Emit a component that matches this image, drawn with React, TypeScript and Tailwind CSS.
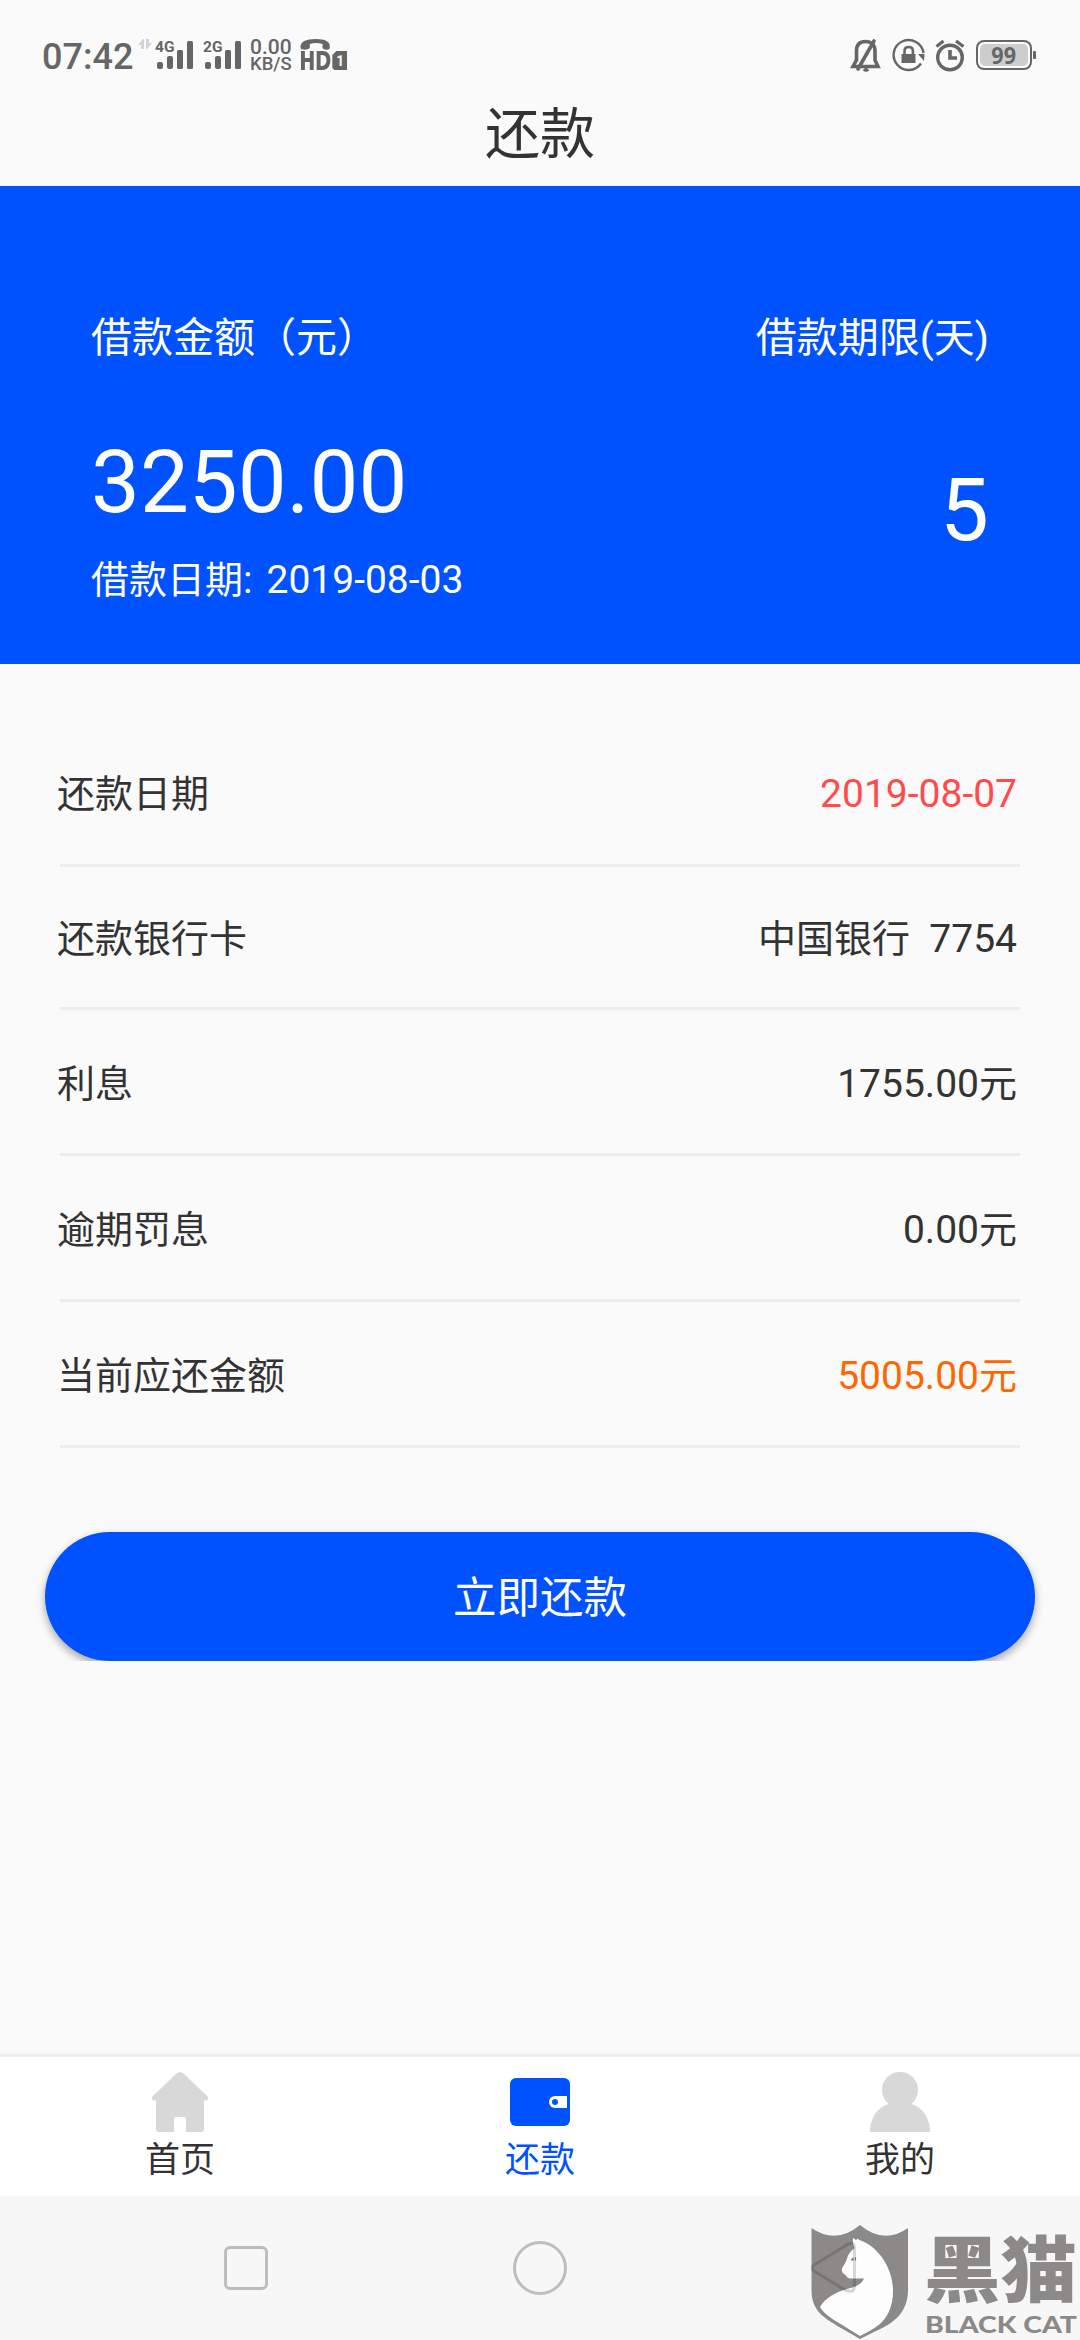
const details = [
    { label: '还款日期', bank: '', value: '2019-08-07', unit: '', color: 'text-[#ff4b4b]', height: 'h-[147px]' },
    { label: '还款银行卡', bank: '中国银行', value: '  7754', unit: '', color: 'text-[#333333]', height: 'h-[143px]' },
    { label: '利息', bank: '', value: '1755.00', unit: '元', color: 'text-[#333333]', height: 'h-[146px]' },
    { label: '逾期罚息', bank: '', value: '0.00', unit: '元', color: 'text-[#333333]', height: 'h-[146px]' },
    { label: '当前应还金额', bank: '', value: '5005.00', unit: '元', color: 'text-[#ff6600]', height: 'h-[146px]' },
];

function SignalIcon({ label }: { label: string }) {
    return (
        <svg width="42" height="36" viewBox="0 0 42 36" fill="#666666">
            <text x="0" y="17" fontSize="15.5" fontWeight="700" fontFamily="Roboto, sans-serif">
                {label}
            </text>
            <rect x="2" y="27" width="6" height="7" rx="2" />
            <rect x="12" y="21" width="6" height="13" rx="2" />
            <rect x="22" y="15" width="6" height="19" rx="1.5" />
            <rect x="32" y="6" width="6" height="28" rx="1.5" />
        </svg>
    );
}

function StatusBar() {
    return (
        <div className="flex h-[76px] items-end justify-between pl-[42px] pr-[44px] text-[#666666]">
            <div className="flex h-[41px] items-start">
                <span className="w-[95px] text-[36px] font-medium leading-[45px]">07:42</span>
                <svg width="16" height="14" viewBox="0 0 16 14" fill="#d4d4d4" className="ml-px mt-[3px]">
                    <path d="M0 7 5 1h1v10H3V7zM8 1h3v4h3l-5 6H8z" />
                </svg>
                <div className="ml-px w-[48px]"><SignalIcon label="4G" /></div>
                <div className="w-[47px]"><SignalIcon label="2G" /></div>
                <div className="mt-1 w-[50px] font-medium">
                    <div className="text-[21px] leading-[17px]">0.00</div>
                    <div className="text-[18.5px] leading-[16px]">KB/S</div>
                </div>
                <svg width="48" height="36" viewBox="1 0 49 36" preserveAspectRatio="none" fill="#666666">
                    <path d="M2 14c-2-6 3-10 15-10s16 4 14 10c-2 1-6 1-7-1v-4q-7-2-13 0v4c-2 2-7 2-9 1z" />
                    <path d="M2 16h4v7h5v-7h4v19h-4v-8H6v8H2zM18 16h6c5 0 8 3 8 9s-3 10-8 10h-6zM22 20v11c4 0 6-2 6-6s-2-5-6-5z" />
                    <path d="M34 20l4-4h11v19H36l-2-2z" />
                    <text x="38" y="31" fontSize="14" fontWeight="700" fontFamily="Roboto, sans-serif" fill="#fafafa">1</text>
                </svg>
            </div>
            <div className="flex h-[38px] items-start">
                <svg width="32" height="34" viewBox="0 0 32 34" fill="none" stroke="#666666" strokeWidth="3.6">
                    <path d="M3 28.5h25L25 22V13c0-6-3.500-9.500-9.500-9.500S6.500 7 6.500 13v9z" />
                    <path d="M24 3 8 31" strokeLinecap="round" />
                    <path d="M14 31q2 2 4 0" />
                </svg>
                <svg width="34" height="34" viewBox="0 0 34 34" className="ml-[10px]">
                    <path d="M31.500 15A15 15 0 1 0 29 25.500" fill="none" stroke="#666666" strokeWidth="2.4" />
                    <path d="M26 16h6.500l-.5 7z" fill="#666666" />
                    <path d="M9.500 16h14v9h-14z" fill="#666666" />
                    <path d="M12.500 17v-4q0-4 4.200-4t4.200 4v4" fill="none" stroke="#666666" strokeWidth="2.6" />
                </svg>
                <svg width="32" height="34" viewBox="0 0 32 34" fill="none" stroke="#666666" className="ml-[9px]">
                    <circle cx="15" cy="19.500" r="12.300" strokeWidth="3.400" />
                    <path d="M15 12v8h7" strokeWidth="3.600" />
                    <path d="m1.500 8.500 7-5.500M21 3l7.500 5.500" strokeWidth="3.200" />
                </svg>
                <div className="ml-[9px] mt-0.5 flex h-[30px] w-[56px] rounded-[8px] border-2 border-[#666666] p-0.5">
                    <div className="flex flex-1 items-center justify-center rounded-[5px] bg-[#cdcdcd]">
                        <span className="scale-x-90 font-['Noto_Sans'] text-[24px] font-bold leading-none">99</span>
                    </div>
                </div>
                <div className="ml-px mt-[13px] h-2 w-[3px] rounded-[1px] bg-[#666666]" />
            </div>
        </div>
    );
}

function LoanSummary() {
    return (
        <section className="flex h-[478px] justify-between bg-[#0052ff] px-[91px] text-white">
            <div className="flex flex-col">
                <div className="mt-[122px] text-[41px] leading-[60px]">借款金额（元）</div>
                <div className="mt-[62px] text-[87px] leading-[104px]">3250.00</div>
                <div className="mt-[16px] flex items-baseline leading-[60px]">
                    <span className="text-[38px]">借款日期</span>
                    <span className="text-[39px]">:</span>
                    <span className="ml-[14px] text-[39px]">2019-08-03</span>
                </div>
            </div>
            <div className="flex flex-col items-end">
                <div className="mt-[122px] text-[41px] leading-[60px]">借款期限(天)</div>
                <div className="mt-[90px] text-[87px] leading-[104px]">5</div>
            </div>
        </section>
    );
}

function HomeIcon() {
    return (
        <svg width="60" height="60" viewBox="0 0 60 60" fill="#d8d8d8">
            <path d="M26.500 1.500q3.500-3 7 0L57.500 24.500q2 4-2 4H54V57q0 3-3 3H36V48q0-3-3-3h-6q-3 0-3 3v12H9q-3 0-3-3V28.500H4.500q-4 0-2-4z" />
        </svg>
    );
}

function WalletIcon() {
    return (
        <svg width="60" height="60" viewBox="0 0 60 60">
            <rect y="6" width="60" height="48" rx="6" fill="#0052ff" />
            <path d="M57 24H45a6 6 0 0 0 0 12h12z" fill="#ffffff" />
            <circle cx="45" cy="30" r="3" fill="#0052ff" />
        </svg>
    );
}

function UserIcon() {
    return (
        <svg width="60" height="60" viewBox="0 0 60 60" fill="#d8d8d8">
            <circle cx="30" cy="18" r="18" />
            <path d="M0 60C0 42 12 30 30 30s30 12 30 30z" />
        </svg>
    );
}

const tabs = [
    { name: '首页', icon: <HomeIcon />, active: false },
    { name: '还款', icon: <WalletIcon />, active: true },
    { name: '我的', icon: <UserIcon />, active: false },
];

function BlackCatLogo() {
    return (
        <svg width="270" height="140" viewBox="0 -24 270 140" className="absolute bottom-0 right-0">
            {/* Shield */}
            <path d="M1.500 4Q26 21 50 1q24 20 48 3v62c0 22-14 33-30 40L50 115 31 104C14 94 1.500 87 1.500 66z" fill="#8c8989" />
            {/* Cat */}
            <path d="M43 14l3 2 2-1.500 1 1.500c17 5 33 25 34 49 .500 16-5 28-13 35-6 5-14 9-20 12L29 99c-8-5-15-9-19-16 5-9 16-15 27-18 8-2 14-4 17-10.500H42c-3 0-5-.500-6-3-3-2-5-4-4-7 2-4 4-6 5-10 1-4 4-8 7.500-10.500-1.500-3-2-6-1.500-10z" fill="#fdfdfd" />
            <path d="M40.500 36l3-3v4zM45 33q2.500 1 0 4z" fill="#777575" />
            {/* Back key under the shield */}
            <path d="M37.500 20.500 4 41q-4 3 0 6l31 19q9.500 4 9.500-4V24q0-7-7-3.500z" fill="none" stroke="#000000" strokeOpacity="0.150" strokeWidth="3" />
            <text x="114" y="72" fontSize="72" fontWeight="900" textLength="153" lengthAdjust="spacingAndGlyphs" fontFamily="'Noto Sans CJK SC', sans-serif" fill="#8c8989">
                黑猫
            </text>
            <text x="115" y="109" fontSize="23" fontWeight="900" textLength="152" lengthAdjust="spacingAndGlyphs" fontFamily="Lato, sans-serif" fill="#8c8989">
                BLACK CAT
            </text>
        </svg>
    );
}

export default function App() {
    return (
        <main className="flex h-[2340px] w-[1080px] flex-col overflow-hidden bg-[#fafafa] font-[Roboto,'Noto_Sans_CJK_SC',sans-serif] text-[#333333]">
            <StatusBar />
            <h1 className="flex h-[110px] items-center justify-center pt-[6px] text-[55px] leading-none">还款</h1>
            <LoanSummary />

            {/* Repayment details */}
            <section className="mt-[56px] px-[60px]">
                {details.map((row) => (
                    <div
                        key={row.label}
                        className={`flex items-center justify-between border-b-[3px] border-[#ededed] pt-[5px] text-[38px] ${row.height}`}
                    >
                        <span className="-ml-[3px]">{row.label}</span>
                        <span className={`mr-[3px] whitespace-pre ${row.color}`}>
                            {row.bank}
                            <span className="text-[39px]">{row.value}</span>
                            {row.unit}
                        </span>
                    </div>
                ))}
            </section>

            {/* Wrapper cuts the button shadow along its bottom edge */}
            <div className="mt-[64px] overflow-hidden px-[45px] pt-5">
                <button className="flex h-[129px] w-full items-center justify-center rounded-full bg-[#0052ff] pt-[5px] text-[43.5px] text-white shadow-[0_4px_8px_rgba(0,0,0,0.35)]">
                    立即还款
                </button>
            </div>

            <nav className="mt-auto flex h-[142px] border-t-[3px] border-[#ededed] bg-white">
                {tabs.map((tab) => (
                    <div
                        key={tab.name}
                        className={`flex flex-1 flex-col items-center pt-[15px] text-[35px] leading-[58px] ${tab.active ? 'text-[#0052ff]' : ''}`}
                    >
                        {tab.icon}
                        <span>{tab.name}</span>
                    </div>
                ))}
            </nav>

            {/* System navigation keys */}
            <div className="relative flex h-[144px] bg-[#f7f7f7] pl-[224px]">
                <div className="mt-[50px] size-[44px] rounded-[6px] border-[3px] border-[#bdbdbd]" />
                <div className="ml-[245px] mt-[45px] size-[54px] rounded-full border-[3px] border-[#bdbdbd]" />
                <BlackCatLogo />
            </div>
        </main>
    );
}
